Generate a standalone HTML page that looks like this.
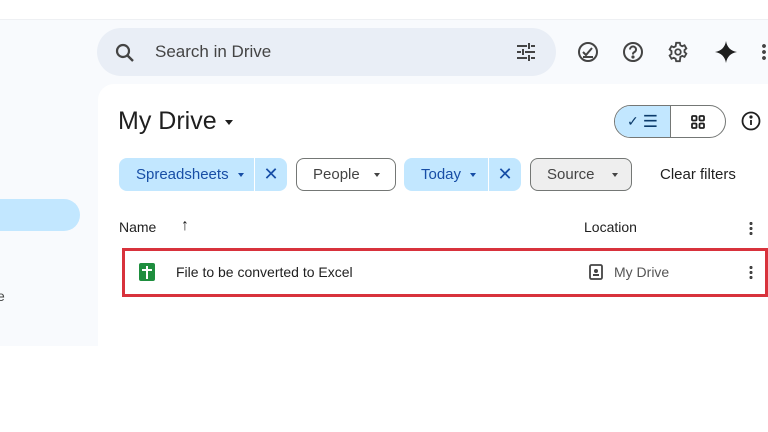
<!DOCTYPE html>
<html><head><style>
*{margin:0;padding:0;box-sizing:border-box}
body{width:768px;height:432px;background:#fff;position:relative;overflow:hidden;font-family:"Liberation Sans",Arial,sans-serif;color:#1f1f1f}
.abs{position:absolute}
.chip{position:absolute;top:158px;height:33px;border-radius:8px;font-size:15px;display:flex;align-items:center}
.blue{background:#c2e7ff;color:#0b57d0;color:#174ea6}
.tri{display:inline-block;width:0;height:0;border-left:3.5px solid transparent;border-right:3.5px solid transparent;border-top:4px solid currentColor;margin-left:9px}
</style></head><body>
<div class="abs" style="left:0;top:20px;width:768px;height:326px;background:#f8fafd"></div>
<div class="abs" style="left:0;top:19px;width:768px;height:1px;background:#eef0f3"></div>
<div class="abs" style="left:98px;top:84px;width:670px;height:262px;background:#fff;border-radius:16px 0 0 0"></div>
<div class="abs" style="left:0;top:199px;width:80px;height:32px;background:#c2e7ff;border-radius:0 16px 16px 0"></div>
<div class="abs" style="left:-3px;top:288px;font-size:14px;color:#444">e</div>

<!-- search -->
<div class="abs" style="left:97px;top:28px;width:459px;height:48px;background:#e9eef6;border-radius:24px"></div>
<svg class="abs" style="left:114px;top:42px" width="22" height="22" viewBox="0 0 22 22"><circle cx="9" cy="9" r="6" fill="none" stroke="#444" stroke-width="2.2"/><path d="M13.5 13.5L19 19" stroke="#444" stroke-width="2.4"/></svg>
<div class="abs" style="left:155px;top:42px;font-size:17px;color:#444">Search in Drive</div>
<svg class="abs" style="left:515px;top:42px" width="22" height="20" viewBox="0 0 22 20" stroke="#444" stroke-width="2"><path d="M2 4h10M16 4h4M14 1v6M2 10h4M10 10h10M8 7v6M2 16h10M16 16h4M14 13v6"/></svg>
<!-- top icons -->
<svg class="abs" style="left:577px;top:41px" width="22" height="22" viewBox="0 0 22 22" fill="none" stroke="#444" stroke-width="2"><circle cx="11" cy="11" r="9"/><path d="M6 11l3 3 6-7M6 16h10"/></svg>
<svg class="abs" style="left:622px;top:41px" width="22" height="22" viewBox="0 0 22 22" fill="none" stroke="#444" stroke-width="2"><circle cx="11" cy="11" r="9"/><path d="M8 8.5a3 3 0 1 1 4 2.8c-1 .5-1 1.2-1 2.2"/><circle cx="11" cy="16" r=".6" fill="#444"/></svg>
<svg class="abs" style="left:667px;top:41px" width="22" height="22" viewBox="0 0 24 24" fill="none" stroke="#444" stroke-width="2"><path d="M10 2h4l.6 2.6 2 1.1 2.5-1 2 3.4-2 1.8v2.2l2 1.8-2 3.4-2.5-1-2 1.1L14 22h-4l-.6-2.6-2-1.1-2.5 1-2-3.4 2-1.8V11l-2-1.8 2-3.4 2.5 1 2-1.1z"/><circle cx="12" cy="12" r="3"/></svg>
<svg class="abs" style="left:714px;top:40px" width="24" height="24" viewBox="0 0 24 24"><path d="M12 1C12.8 7 17 11.2 23 12 17 12.8 12.8 17 12 23 11.2 17 7 12.8 1 12 7 11.2 11.2 7 12 1z" fill="#1f1f1f"/></svg>
<div class="abs" style="left:762px;top:43px;width:4px;height:18px;background:radial-gradient(circle,#444 1.8px,transparent 2px) 0 0/4px 6px"></div>

<!-- title -->
<div class="abs" style="left:118px;top:107px;font-size:25px;color:#1f1f1f">My Drive</div>
<div class="abs" style="left:225px;top:120px;border-left:4px solid transparent;border-right:4px solid transparent;border-top:5px solid #1f1f1f"></div>
<!-- view toggle -->
<div class="abs" style="left:614px;top:105px;width:112px;height:33px;border:1.5px solid #747775;border-radius:17px;overflow:hidden;display:flex">
<div style="width:56px;height:100%;background:#c2e7ff;border-right:1.5px solid #747775;display:flex;align-items:center;justify-content:center;gap:4px;color:#0b3b6b;font-size:14px">✓<span style="font-size:17px">☰</span></div>
<div style="flex:1;display:flex;align-items:center;justify-content:center">
<svg width="14" height="14" viewBox="0 0 14 14" fill="none" stroke="#1f1f1f" stroke-width="1.8"><rect x="1" y="1" width="4.5" height="4.5" rx="1"/><rect x="8.5" y="1" width="4.5" height="4.5" rx="1"/><rect x="1" y="8.5" width="4.5" height="4.5" rx="1"/><rect x="8.5" y="8.5" width="4.5" height="4.5" rx="1"/></svg></div></div>
<svg class="abs" style="left:741px;top:111px" width="20" height="20" viewBox="0 0 20 20" fill="none" stroke="#1f1f1f" stroke-width="1.8"><circle cx="10" cy="10" r="8.5"/><path d="M10 9v5"/><circle cx="10" cy="6" r=".7" fill="#1f1f1f"/></svg>

<!-- chips -->
<div class="chip blue" style="left:119px;width:135px;padding-left:17px;border-radius:8px 0 0 8px">Spreadsheets<span class="tri"></span></div>
<div class="chip blue" style="left:255px;width:32px;border-radius:0 8px 8px 0;justify-content:center;font-size:18px">✕</div>
<div class="chip" style="left:296px;width:100px;border:1.3px solid #747775;padding-left:16px;color:#444">People<span class="tri" style="margin-left:14px"></span></div>
<div class="chip blue" style="left:404px;width:84px;padding-left:17px;border-radius:8px 0 0 8px">Today<span class="tri"></span></div>
<div class="chip blue" style="left:489px;width:32px;border-radius:0 8px 8px 0;justify-content:center;font-size:18px">✕</div>
<div class="chip" style="left:530px;width:102px;border:1.3px solid #747775;background:#eeeeee;padding-left:16px;color:#444">Source<span class="tri" style="margin-left:17px"></span></div>
<div class="abs" style="left:660px;top:166px;font-size:15px;color:#1f1f1f">Clear filters</div>

<!-- table -->
<div class="abs" style="left:119px;top:219px;font-size:14px">Name</div>
<div class="abs" style="left:181px;top:217px;font-size:16px">↑</div>
<div class="abs" style="left:584px;top:219px;font-size:14px">Location</div>
<div class="abs" style="left:749px;top:221px;width:4px;height:14px;background:radial-gradient(circle,#444 1.5px,transparent 1.7px) 0 0/4px 5px"></div>
<div class="abs" style="left:122px;top:248px;width:646px;height:49px;border:3px solid #d8323c"></div>
<div class="abs" style="left:139px;top:263px;width:16px;height:18px;background:#1e8e3e;border-radius:2px"></div>
<div class="abs" style="left:146px;top:266px;width:2px;height:13px;background:#fff"></div>
<div class="abs" style="left:142px;top:269px;width:10px;height:2px;background:#fff"></div>
<div class="abs" style="left:176px;top:264px;font-size:14px">File to be converted to Excel</div>
<svg class="abs" style="left:589px;top:264px" width="14" height="16" viewBox="0 0 14 16"><rect x="1" y="1" width="12" height="14" rx="1.5" fill="none" stroke="#444" stroke-width="1.8"/><circle cx="7" cy="7" r="2" fill="#444"/><rect x="4" y="10" width="6" height="2" fill="#444"/></svg>
<div class="abs" style="left:614px;top:264px;font-size:14px;color:#555">My Drive</div>
<div class="abs" style="left:749px;top:265px;width:4px;height:14px;background:radial-gradient(circle,#444 1.5px,transparent 1.7px) 0 0/4px 5px"></div>
</body></html>
